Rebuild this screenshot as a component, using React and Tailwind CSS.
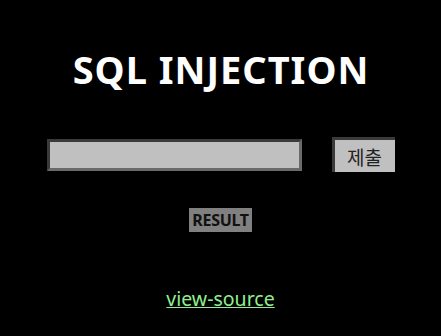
export default function App() {
  return (
    <div className="w-[441px] h-[336px] bg-black flex flex-col items-center overflow-hidden" style={{ fontFamily: '"Noto Sans", "Noto Sans CJK KR", sans-serif' }}>
      <h1 className="mt-[44px] pl-[1px] text-[38px] leading-[50px] font-bold text-white tracking-[1px]">SQL INJECTION</h1>
      <div className="mt-[43px] flex items-start gap-[30px]">
        <input className="mt-[2px] w-[255px] h-[32px] bg-[#c0c0c0] border-[3px] border-t-[#3a3a3a] border-l-[#3a3a3a] border-r-[#6a6a6a] border-b-[#6a6a6a] outline-none" />
        <button className="w-[63px] h-[35px] bg-[#c0c0c0] border-t-[3px] border-l-[3px] border-[#3a3a3a] text-[19px] text-[#222] leading-none flex items-center justify-center pt-[1px]" style={{ fontFamily: '"Noto Sans CJK KR", sans-serif' }}>제출</button>
      </div>
      <div className="mt-[36px] w-[63px] h-[24px] bg-[#808080] text-[16px] leading-[24px] font-bold text-[#111] text-center tracking-[-0.3px]">RESULT</div>
      <a href="#" className="mt-[55px] text-[19.5px] leading-[24px] text-[#90ee90] underline">view-source</a>
    </div>
  );
}
